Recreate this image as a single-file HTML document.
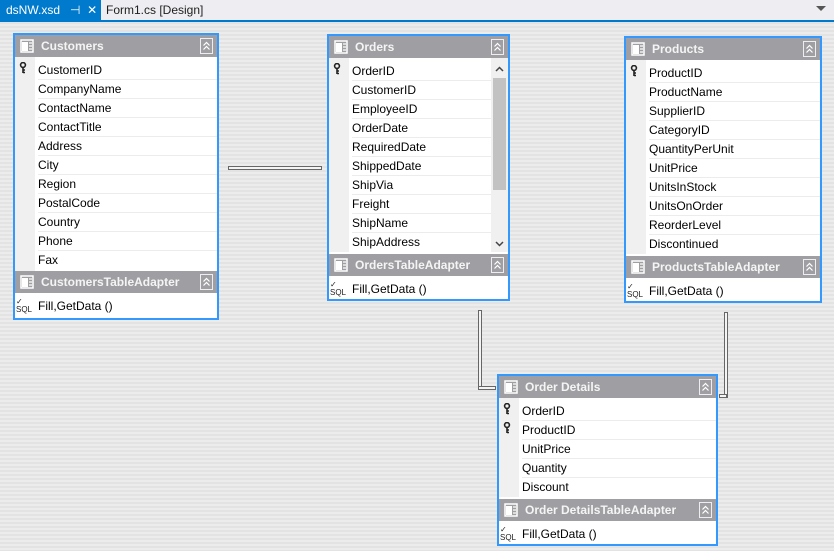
<!DOCTYPE html>
<html><head><style>
*{margin:0;padding:0;box-sizing:border-box}
body{width:834px;height:551px;overflow:hidden;font-family:"Liberation Sans",sans-serif;font-size:12px;position:relative;background:repeating-linear-gradient(180deg,#ececec 0,#ececec 2px,#e3e3e3 2px,#e3e3e3 4px)}
.tabs{position:absolute;left:0;top:0;width:834px;height:20px;background:#eeeef2}
.tab1{position:absolute;left:0;top:0;width:101px;height:20px;background:#007acc;color:#fff;font-size:12px;line-height:20px;padding-left:6px}
.tab2{position:absolute;left:106px;top:0;line-height:20px;color:#1e1e1e}
.bline{position:absolute;left:0;top:20px;width:834px;height:2px;background:#007acc}
.p{position:absolute;border:2px solid #3399ff;background:#fff}
.h{position:absolute;left:0;right:0;height:22px;background:#9f9fa3;color:#f4f4f4;font-weight:bold;line-height:22px;padding-left:26px}
.h svg.ic{position:absolute;left:4px;top:3px}
.h .cb{position:absolute;right:4px;top:3px;width:13px;height:16px;border:1px solid #eee}
.gut{position:absolute;left:0;width:20px;background:#f0f0f0}
.r{position:absolute;left:23px;height:19px;line-height:19px;border-bottom:1px solid #ececec;color:#000}
.key{position:absolute;left:4px}
.f{position:absolute;left:0;right:0;height:21px;line-height:21px;padding-left:23px}
.sql{position:absolute;left:1px;top:2px;font-size:8px;line-height:8px;color:#222}
.ln{position:absolute;background:#f4f4f4;border:1px solid #666}
</style></head><body>
<svg width="0" height="0" style="position:absolute"><defs>
<symbol id="db" viewBox="0 0 16 16"><path d="M2 2h12v12H2z" fill="none" stroke="#fff" stroke-width="1.5"/><rect x="3" y="4" width="6" height="9" fill="#fff"/><path d="M10 5h3M10 8h3M10 11h3" stroke="#fff" stroke-width="1.3"/></symbol>
<symbol id="ky" viewBox="0 0 8 12"><circle cx="4" cy="3" r="2.4" fill="none" stroke="#222" stroke-width="1.6"/><path d="M4 5v6M4 8h2M4 10.5h2" stroke="#222" stroke-width="1.6"/></symbol>
<symbol id="cb" viewBox="0 0 11 14"><path d="M2.5 6.5l3-3 3 3M2.5 10.5l3-3 3 3" fill="none" stroke="#fff" stroke-width="1.2"/></symbol>
</defs></svg>
<div class="tabs"></div>
<div class="tab1">dsNW.xsd &nbsp;&nbsp;⊣ &nbsp;✕</div>
<div class="tab2">Form1.cs [Design]</div>
<div class="bline"></div>
<div style="position:absolute;right:8px;top:6px;width:0;height:0;border-left:5px solid transparent;border-right:5px solid transparent;border-top:5px solid #555"></div>

<div class="ln" style="left:228px;top:166px;width:94px;height:4px"></div>
<div class="ln" style="left:478px;top:310px;width:4px;height:80px"></div>
<div class="ln" style="left:478px;top:386px;width:18px;height:4px"></div>
<div class="ln" style="left:724px;top:312px;width:4px;height:86px"></div>
<div class="ln" style="left:719px;top:394px;width:8px;height:4px"></div>

<!-- Customers -->
<div class="p" style="left:13px;top:33px;width:206px;height:287px">
<div class="h" style="top:0">Customers<svg class="ic" width="16" height="16"><use href="#db"/></svg><svg class="cb" viewBox="0 0 11 14"><use href="#cb"/></svg></div>
<div class="gut" style="top:22px;height:214px"></div>
<svg class="key" style="top:27px" width="8" height="12"><use href="#ky"/></svg>
<div class="r" style="top:26px;width:179px">CustomerID</div>
<div class="r" style="top:45px;width:179px">CompanyName</div>
<div class="r" style="top:64px;width:179px">ContactName</div>
<div class="r" style="top:83px;width:179px">ContactTitle</div>
<div class="r" style="top:102px;width:179px">Address</div>
<div class="r" style="top:121px;width:179px">City</div>
<div class="r" style="top:140px;width:179px">Region</div>
<div class="r" style="top:159px;width:179px">PostalCode</div>
<div class="r" style="top:178px;width:179px">Country</div>
<div class="r" style="top:197px;width:179px">Phone</div>
<div class="r" style="top:216px;width:179px;border:0">Fax</div>
<div class="h" style="top:236px">CustomersTableAdapter<svg class="ic" width="16" height="16"><use href="#db"/></svg><svg class="cb" viewBox="0 0 11 14"><use href="#cb"/></svg></div>
<div class="f" style="top:261px"><span class="sql">✓<br>SQL</span>Fill,GetData ()</div>
</div>

<!-- Orders -->
<div class="p" style="left:327px;top:34px;width:183px;height:267px">
<div class="h" style="top:0">Orders<svg class="ic" width="16" height="16"><use href="#db"/></svg><svg class="cb" viewBox="0 0 11 14"><use href="#cb"/></svg></div>
<div class="gut" style="top:22px;height:194px"></div>
<svg class="key" style="top:27px" width="8" height="12"><use href="#ky"/></svg>
<div class="r" style="top:26px;width:139px">OrderID</div>
<div class="r" style="top:45px;width:139px">CustomerID</div>
<div class="r" style="top:64px;width:139px">EmployeeID</div>
<div class="r" style="top:83px;width:139px">OrderDate</div>
<div class="r" style="top:102px;width:139px">RequiredDate</div>
<div class="r" style="top:121px;width:139px">ShippedDate</div>
<div class="r" style="top:140px;width:139px">ShipVia</div>
<div class="r" style="top:159px;width:139px">Freight</div>
<div class="r" style="top:178px;width:139px">ShipName</div>
<div class="r" style="top:197px;width:139px;border:0">ShipAddress</div>
<div style="position:absolute;left:162px;top:22px;width:17px;height:194px;background:#f0f0f0"></div>
<div style="position:absolute;left:164px;top:42px;width:13px;height:112px;background:#c2c2c2"></div>
<svg style="position:absolute;left:166px;top:30px" width="9" height="6"><path d="M1 5l3.5-3.5L8 5" fill="none" stroke="#444" stroke-width="1.5"/></svg>
<svg style="position:absolute;left:166px;top:205px" width="9" height="6"><path d="M1 1l3.5 3.5L8 1" fill="none" stroke="#444" stroke-width="1.5"/></svg>
<div class="h" style="top:218px">OrdersTableAdapter<svg class="ic" width="16" height="16"><use href="#db"/></svg><svg class="cb" viewBox="0 0 11 14"><use href="#cb"/></svg></div>
<div class="f" style="top:243px"><span class="sql">✓<br>SQL</span>Fill,GetData ()</div>
</div>

<!-- Products -->
<div class="p" style="left:624px;top:36px;width:198px;height:267px">
<div class="h" style="top:0">Products<svg class="ic" width="16" height="16"><use href="#db"/></svg><svg class="cb" viewBox="0 0 11 14"><use href="#cb"/></svg></div>
<div class="gut" style="top:22px;height:194px"></div>
<svg class="key" style="top:27px" width="8" height="12"><use href="#ky"/></svg>
<div class="r" style="top:26px;width:171px">ProductID</div>
<div class="r" style="top:45px;width:171px">ProductName</div>
<div class="r" style="top:64px;width:171px">SupplierID</div>
<div class="r" style="top:83px;width:171px">CategoryID</div>
<div class="r" style="top:102px;width:171px">QuantityPerUnit</div>
<div class="r" style="top:121px;width:171px">UnitPrice</div>
<div class="r" style="top:140px;width:171px">UnitsInStock</div>
<div class="r" style="top:159px;width:171px">UnitsOnOrder</div>
<div class="r" style="top:178px;width:171px">ReorderLevel</div>
<div class="r" style="top:197px;width:171px;border:0">Discontinued</div>
<div class="h" style="top:218px">ProductsTableAdapter<svg class="ic" width="16" height="16"><use href="#db"/></svg><svg class="cb" viewBox="0 0 11 14"><use href="#cb"/></svg></div>
<div class="f" style="top:243px"><span class="sql">✓<br>SQL</span>Fill,GetData ()</div>
</div>

<!-- Order Details -->
<div class="p" style="left:497px;top:374px;width:221px;height:172px">
<div class="h" style="top:0">Order Details<svg class="ic" width="16" height="16"><use href="#db"/></svg><svg class="cb" viewBox="0 0 11 14"><use href="#cb"/></svg></div>
<div class="gut" style="top:22px;height:99px"></div>
<svg class="key" style="top:27px" width="8" height="12"><use href="#ky"/></svg>
<svg class="key" style="top:46px" width="8" height="12"><use href="#ky"/></svg>
<div class="r" style="top:26px;width:194px">OrderID</div>
<div class="r" style="top:45px;width:194px">ProductID</div>
<div class="r" style="top:64px;width:194px">UnitPrice</div>
<div class="r" style="top:83px;width:194px">Quantity</div>
<div class="r" style="top:102px;width:194px;border:0">Discount</div>
<div class="h" style="top:123px">Order DetailsTableAdapter<svg class="ic" width="16" height="16"><use href="#db"/></svg><svg class="cb" viewBox="0 0 11 14"><use href="#cb"/></svg></div>
<div class="f" style="top:148px"><span class="sql">✓<br>SQL</span>Fill,GetData ()</div>
</div>
</body></html>
